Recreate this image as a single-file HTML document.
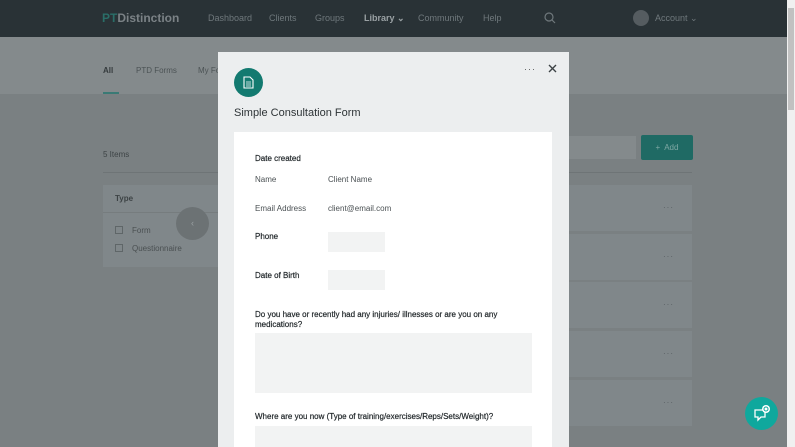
<!DOCTYPE html>
<html><head><style>
*{margin:0;padding:0;box-sizing:border-box}
html,body{width:795px;height:447px;overflow:hidden}
body{position:relative;font-family:"Liberation Sans",sans-serif;background:#7a8082}
.abs{position:absolute}
.nav{left:0;top:0;width:787px;height:37px;background:#293236}
.nav span{position:absolute;top:13px;font-size:9px;color:#6f787c}
.sub{left:0;top:37px;width:787px;height:57px;background:#848a8c}
.t{font-size:8px;color:#3d4345;position:absolute}
.row{position:absolute;left:556px;width:136px;height:46px;background:#80878a}
.dots{position:absolute;right:18px;top:18px;font-size:8px;color:#555c5f;letter-spacing:1px}
.modal{left:218px;top:52px;width:351px;height:395px;background:#eceeef;overflow:hidden}
.card{position:absolute;left:16px;top:80px;width:318px;height:330px;background:#fff}
.card .l{position:absolute;font-size:8px;color:#4a5053}
.card .b{position:absolute;font-size:8px;color:#22282b;-webkit-text-stroke:0.2px #22282b}
.fld{position:absolute;background:#f2f3f3}
</style></head><body>
<div class="abs nav">
<span style="left:102px;top:11px;font-size:12px;font-weight:bold;color:#7b8286"><span style="position:static;color:#2a6e68;font-size:12px">PT</span>Distinction</span>
<span style="left:208px">Dashboard</span>
<span style="left:269px">Clients</span>
<span style="left:315px">Groups</span>
<span style="left:364px;color:#9aa1a4;font-weight:bold">Library ⌄</span>
<span style="left:418px">Community</span>
<span style="left:483px">Help</span>
<svg class="abs" style="left:544px;top:12px" width="12" height="12"><circle cx="5" cy="5" r="4" fill="none" stroke="#6f787c" stroke-width="1.2"/><path d="M8 8l3 3" stroke="#6f787c" stroke-width="1.2"/></svg>
<div class="abs" style="left:633px;top:10px;width:16px;height:16px;border-radius:50%;background:#555c60"></div>
<span style="left:655px">Account ⌄</span>
</div>
<div class="abs sub">
<div class="t" style="left:103px;top:29px;font-weight:bold;color:#353b3d">All</div>
<div class="abs" style="left:103px;top:55px;width:16px;height:2px;background:#3a7a75"></div>
<div class="t" style="left:136px;top:29px;color:#4c5355">PTD Forms</div>
<div class="t" style="left:198px;top:29px;color:#4c5355">My Fo</div>
</div>
<div class="t" style="left:103px;top:150px">5 Items</div>
<div class="abs" style="left:103px;top:172px;width:115px;height:1px;background:#6e7476"></div>
<div class="abs" style="left:103px;top:185px;width:115px;height:82px;background:#80878a"></div>
<div class="t" style="left:115px;top:194px;font-weight:bold">Type</div>
<div class="abs" style="left:103px;top:212px;width:115px;height:1px;background:#767c7e"></div>
<div class="abs" style="left:115px;top:226px;width:8px;height:8px;border:1px solid #5f6668"></div>
<div class="t" style="left:132px;top:226px;color:#4a5052">Form</div>
<div class="abs" style="left:115px;top:244px;width:8px;height:8px;border:1px solid #5f6668"></div>
<div class="t" style="left:132px;top:244px;color:#4a5052">Questionnaire</div>
<div class="abs" style="left:176px;top:207px;width:33px;height:33px;border-radius:50%;background:#6c7274;color:#9ba1a3;font-size:9px;text-align:center;line-height:33px">‹</div>
<div class="abs" style="left:569px;top:136px;width:67px;height:23px;background:#848a8c"></div>
<div class="abs" style="left:641px;top:135px;width:52px;height:25px;background:#1f6a64;border-radius:2px;color:#7fa8a4;font-size:8px;line-height:25px;text-align:center">+&nbsp; Add</div>
<div class="abs" style="left:569px;top:172px;width:123px;height:1px;background:#6e7476"></div>
<div class="row" style="top:185px"><span class="dots">···</span></div>
<div class="row" style="top:234px"><span class="dots">···</span></div>
<div class="row" style="top:282px"><span class="dots">···</span></div>
<div class="row" style="top:331px"><span class="dots">···</span></div>
<div class="row" style="top:380px"><span class="dots">···</span></div>
<div class="abs" style="left:787px;top:0;width:8px;height:447px;background:#f0f0f0"></div>
<div class="abs" style="left:788px;top:8px;width:6px;height:102px;background:#c1c1c1"></div>
<div class="abs modal">
<div class="abs" style="left:16px;top:16px;width:29px;height:29px;border-radius:50%;background:#137a70"></div>
<svg class="abs" style="left:25px;top:24px" width="11" height="13"><path d="M1 1h6l3 3v8H1z" fill="none" stroke="#fff" stroke-width="1.1"/><path d="M3 6h5M3 8h5M3 10h5" stroke="#fff" stroke-width="0.8"/></svg>
<div class="abs" style="left:306px;top:12px;font-size:9px;color:#555;letter-spacing:1px">···</div>
<svg class="abs" style="left:330px;top:12px" width="9" height="9"><path d="M1 1l7 7M8 1l-7 7" stroke="#3c4245" stroke-width="1.4"/></svg>
<div class="abs" style="left:16px;top:55px;font-size:11px;color:#2d3336">Simple Consultation Form</div>
<div class="card">
<div class="b" style="left:21px;top:22px">Date created</div>
<div class="l" style="left:21px;top:43px">Name</div>
<div class="l" style="left:94px;top:43px">Client Name</div>
<div class="l" style="left:21px;top:72px">Email Address</div>
<div class="l" style="left:94px;top:72px">client@email.com</div>
<div class="b" style="left:21px;top:100px">Phone</div>
<div class="fld" style="left:94px;top:100px;width:57px;height:20px"></div>
<div class="b" style="left:21px;top:139px">Date of Birth</div>
<div class="fld" style="left:94px;top:138px;width:57px;height:20px"></div>
<div class="b" style="left:21px;top:178px;white-space:nowrap;line-height:10px">Do you have or recently had any injuries/ illnesses or are you on any<br>medications?</div>
<div class="fld" style="left:21px;top:201px;width:277px;height:60px"></div>
<div class="b" style="left:21px;top:280px;white-space:nowrap">Where are you now (Type of training/exercises/Reps/Sets/Weight)?</div>
<div class="fld" style="left:21px;top:294px;width:277px;height:40px"></div>
</div>
</div>
<div class="abs" style="left:745px;top:397px;width:33px;height:33px;border-radius:50%;background:#0fa89d"></div>
<svg class="abs" style="left:752px;top:403px" width="20" height="20"><path d="M3 7h10v7H9l-3 3v-3H3z" fill="none" stroke="#fff" stroke-width="1.3"/><circle cx="14" cy="6" r="4" fill="#fff"/><circle cx="14" cy="6" r="2" fill="none" stroke="#0fa89d" stroke-width="1"/></svg>
</body></html>
